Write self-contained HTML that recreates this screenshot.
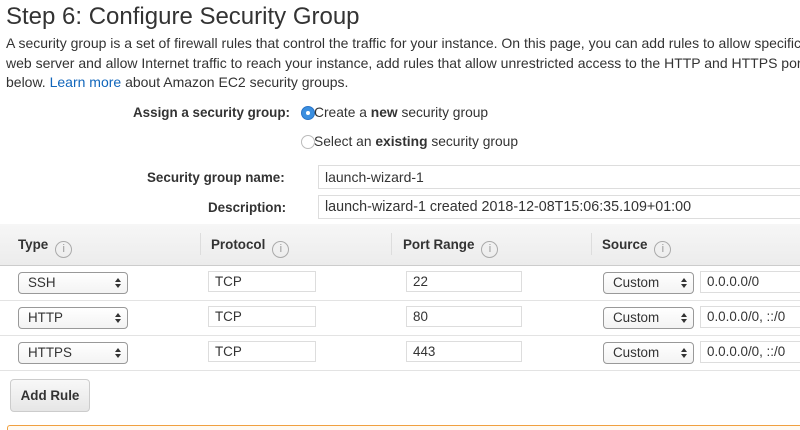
<!DOCTYPE html><html style="overflow:hidden;height:430px"><head><style>
body{margin:0;width:800px;height:430px;overflow:hidden;background:#fff;font-family:"Liberation Sans",sans-serif;color:#333;position:relative}
.a{position:absolute;white-space:nowrap}
p.a{margin:0;font-size:14px;line-height:19.5px}
.lbl{font-weight:bold;font-size:13.4px;text-align:right}
.inp{position:absolute;border:1px solid #ddd;background:#fff;font-size:13.4px;box-sizing:border-box;padding-left:6px;line-height:22px;height:24px}
.sel{position:absolute;border:1px solid #999;border-radius:4px;background:linear-gradient(#fff,#f3f3f3);font-size:13.4px;box-sizing:border-box;padding-left:9px;height:22px;line-height:20px}
.sel:after{content:"";position:absolute;right:6px;top:5px;border:3px solid transparent;border-bottom:4px solid #333;border-top:0}
.sel:before{content:"";position:absolute;right:6px;top:11px;border:3px solid transparent;border-top:4px solid #333;border-bottom:0}
.th{font-weight:bold;font-size:13.4px;top:237px}
.i{display:inline-block;width:15px;height:15px;border:1px solid #aaa;border-radius:50%;font-size:11px;line-height:15px;text-align:center;color:#999;font-weight:normal;margin-left:7px;vertical-align:-3px}
.line{position:absolute;left:0;width:800px;height:1px;background:#e3e3e3}
.sep{position:absolute;top:233px;width:1px;height:22px;background:#ddd}
</style></head><body>
<div class="a" style="left:6px;top:3px;font-size:24px;color:#333">Step 6: Configure Security Group</div>
<p class="a" style="left:6px;top:34px">A security group is a set of firewall rules that control the traffic for your instance. On this page, you can add rules to allow specific</p>
<p class="a" style="left:6px;top:53.5px">web server and allow Internet traffic to reach your instance, add rules that allow unrestricted access to the HTTP and HTTPS port</p>
<p class="a" style="left:6px;top:73px">below. <span style="color:#1166bb">Learn more</span> about Amazon EC2 security groups.</p>
<div class="a lbl" style="left:133px;top:105px">Assign a security group:</div>
<div class="a" style="left:301px;top:106px;width:12px;height:12px;border-radius:50%;background:#3b8fe0;border:1px solid #2a75c8"><div style="position:absolute;left:4px;top:4px;width:4px;height:4px;border-radius:50%;background:#fff"></div></div>
<div class="a" style="left:314px;top:105px;font-size:13.8px">Create a <b>new</b> security group</div>
<div class="a" style="left:301px;top:135px;width:12px;height:12px;border-radius:50%;border:1px solid #bbb"></div>
<div class="a" style="left:314px;top:134px;font-size:13.8px">Select an <b>existing</b> security group</div>
<div class="a lbl" style="left:147px;top:170px">Security group name:</div>
<div class="inp" style="left:318px;top:165px;width:490px;font-size:14px">launch-wizard-1</div>
<div class="a lbl" style="left:208px;top:200px">Description:</div>
<div class="inp" style="left:318px;top:195px;width:490px;font-size:14.3px">launch-wizard-1 created 2018-12-08T15:06:35.109+01:00</div>
<div class="a" style="left:0;top:224px;width:800px;height:41px;background:linear-gradient(#f6f6f6,#ececec);border-bottom:1px solid #ccc"></div>
<div class="a th" style="left:18px">Type<span class="i">i</span></div>
<div class="sep" style="left:200px"></div>
<div class="a th" style="left:211px">Protocol<span class="i">i</span></div>
<div class="sep" style="left:391px"></div>
<div class="a th" style="left:403px">Port Range<span class="i">i</span></div>
<div class="sep" style="left:591px"></div>
<div class="a th" style="left:602px">Source<span class="i">i</span></div>
<div class="sel" style="left:18px;top:272px;width:110px">SSH</div>
<div class="inp" style="left:208px;top:271px;width:108px;height:21px;line-height:20px">TCP</div>
<div class="inp" style="left:406px;top:271px;width:116px;height:21px;line-height:20px">22</div>
<div class="sel" style="left:603px;top:272px;width:91px">Custom</div>
<div class="inp" style="left:700px;top:271px;width:110px;height:22px;line-height:20px">0.0.0.0/0</div>
<div class="line" style="top:300px"></div>
<div class="sel" style="left:18px;top:307px;width:110px">HTTP</div>
<div class="inp" style="left:208px;top:306px;width:108px;height:21px;line-height:20px">TCP</div>
<div class="inp" style="left:406px;top:306px;width:116px;height:21px;line-height:20px">80</div>
<div class="sel" style="left:603px;top:307px;width:91px">Custom</div>
<div class="inp" style="left:700px;top:306px;width:110px;height:22px;line-height:20px">0.0.0.0/0, ::/0</div>
<div class="line" style="top:335px"></div>
<div class="sel" style="left:18px;top:342px;width:110px">HTTPS</div>
<div class="inp" style="left:208px;top:341px;width:108px;height:21px;line-height:20px">TCP</div>
<div class="inp" style="left:406px;top:341px;width:116px;height:21px;line-height:20px">443</div>
<div class="sel" style="left:603px;top:342px;width:91px">Custom</div>
<div class="inp" style="left:700px;top:341px;width:110px;height:22px;line-height:20px">0.0.0.0/0, ::/0</div>
<div class="line" style="top:370px"></div>
<div class="a" style="left:10px;top:379px;width:80px;height:33px;box-sizing:border-box;border:1px solid #ccc;border-radius:4px;background:linear-gradient(#f8f8f8,#e6e6e6);font-weight:bold;font-size:13.4px;text-align:center;line-height:31px">Add Rule</div>
<div class="a" style="left:7px;top:425px;width:793px;height:5px;box-sizing:border-box;border:1px solid #f0a040;border-bottom:0;border-right:0;border-radius:3px 0 0 0;background:#fffaf2"></div>
</body></html>
